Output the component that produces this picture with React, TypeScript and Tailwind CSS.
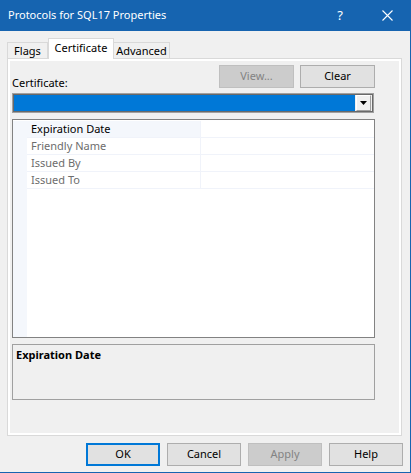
import React from "react";

const font = { fontFamily: '"Noto Sans", "Open Sans", sans-serif' };

function Btn({ label, disabled, primary, w = "w-[75px]" }: { label: string; disabled?: boolean; primary?: boolean; w?: string }) {
  return (
    <div
      className={
        `${w} h-[23px] flex items-center justify-center text-[11px] ` +
        (primary
          ? "border-2 border-[#0078d7] bg-[#e1e1e1] text-black"
          : disabled
          ? "border border-[#bfbfbf] bg-[#cccccc] text-[#838383]"
          : "border border-[#adadad] bg-[#e1e1e1] text-black")
      }
    >
      {label}
    </div>
  );
}

export default function App() {
  const rows = ["Expiration Date", "Friendly Name", "Issued By", "Issued To"];
  return (
    <div style={font} className="w-[411px] h-[473px] bg-[#f0f0f0] border-r border-b border-[#1664b0] flex flex-col overflow-hidden">
      {/* Title bar */}
      <div className="h-[31px] bg-[#1664b0] flex items-center text-white text-[11px] shrink-0">
        <span className="pl-[8px] flex-1 pb-[1px]">Protocols for SQL17 Properties</span>
        <span className="w-[46px] text-center text-[13px] mr-[1px]">?</span>
        <span className="w-[46px] flex justify-center">
          <svg width="11" height="11" viewBox="0 0 11 11">
            <path d="M0.5 0.5 L10.5 10.5 M10.5 0.5 L0.5 10.5" stroke="white" strokeWidth="1.1" />
          </svg>
        </span>
      </div>

      {/* Tabs */}
      <div className="flex items-end pl-[7px] mt-[7px] h-[20px] text-[11px] text-black">
        <div className="h-[16px] w-[41px] border border-b-0 border-[#d9d9d9] bg-[#f0f0f0] flex items-center justify-center leading-none">Flags</div>
        <div className="h-[21px] w-[66px] border border-b-0 border-[#d9d9d9] bg-white flex items-start justify-center pt-[3px] leading-none relative z-10 -mb-[1px]">Certificate</div>
        <div className="h-[16px] w-[56px] border border-b-0 border-l-0 border-[#d9d9d9] bg-[#f0f0f0] flex items-center justify-center leading-none">Advanced</div>
      </div>

      {/* Panel */}
      <div className="ml-[7px] w-[395px] h-[378px] border border-[#d9d9d9] bg-white p-[2px] text-[11px]">
        <div className="h-full bg-[#f0f0f0] pl-[2px] pt-[4px] flex flex-col">
          <div className="flex items-end w-[363px] h-[23px]">
            <span className="flex-1 leading-[14px] -mb-[2px]">Certificate:</span>
            <Btn label="View..." disabled w="w-[75px]" />
            <div className="w-[6px]" />
            <Btn label="Clear" w="w-[75px]" />
          </div>
          {/* Combo */}
          <div className="mt-[5px] w-[362px] h-[20px] border border-[#a0a0a0] flex">
            <div className="flex-1 border border-[#696969] border-r-0 bg-[#0078d7]" />
            <div className="w-[18px] border border-[#696969] border-l-0 flex items-center justify-center bg-[#f0f0f0]">
              <div className="w-[15px] h-full border border-[#ffffff] border-b-[#a0a0a0] border-r-[#a0a0a0] flex items-center justify-center">
                <svg width="7" height="4" viewBox="0 0 7 4"><path d="M0 0 H7 L3.5 4 Z" fill="black" /></svg>
              </div>
            </div>
          </div>
          {/* List */}
          <div className="mt-[6px] w-[363px] h-[219px] border border-[#828282] bg-white pt-[1px] flex flex-col">
            {rows.map((r, i) => (
              <div key={r} className="flex h-[17px]">
                <div className="w-[14px] bg-[#f4f7fc]" />
                <div
                  className={
                    "w-[173px] flex items-center pl-[4px] border-b border-[#f0f3fa] " +
                    (i === 0 ? "bg-[#f4f7fc] text-black" : "bg-white text-[#6d6d6d]")
                  }
                >
                  {r}
                </div>
                <div className="flex-1 border-l border-b border-[#f0f3fa]" />
              </div>
            ))}
            <div className="flex-1 flex">
              <div className="w-[14px] bg-[#f4f7fc]" />
              <div className="flex-1" />
            </div>
          </div>
          {/* Description */}
          <div className="mt-[6px] w-[363px] h-[56px] border border-[#a0a0a0] bg-[#f0f0f0] px-[3px] pt-[2px]">
            <div className="font-bold leading-[16px]">Expiration Date</div>
          </div>
        </div>
      </div>

      {/* Bottom buttons */}
      <div className="mt-[7px] flex justify-end gap-[7px] pr-[7px]">
        <Btn label="OK" primary w="w-[74px]" />
        <Btn label="Cancel" w="w-[74px]" />
        <Btn label="Apply" disabled w="w-[74px]" />
        <Btn label="Help" w="w-[74px]" />
      </div>
    </div>
  );
}
